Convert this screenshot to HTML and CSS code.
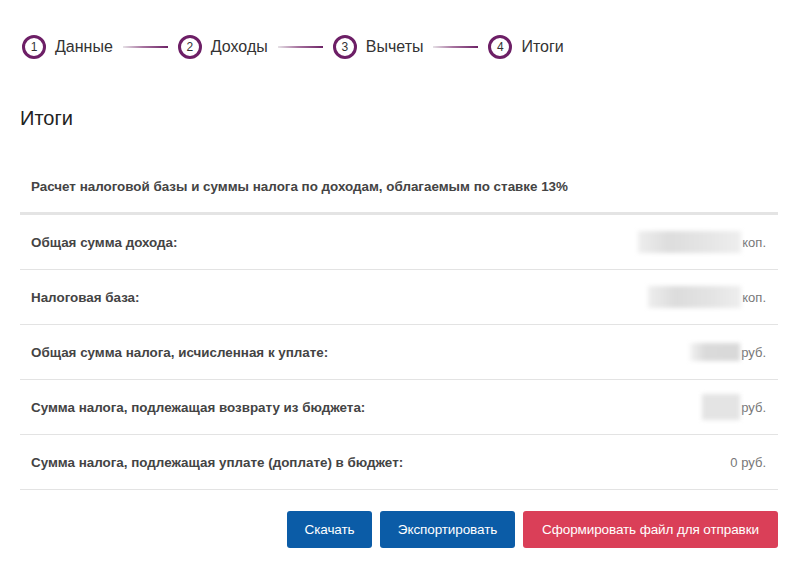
FILE: index.html
```html
<!DOCTYPE html>
<html lang="ru">
<head>
<meta charset="utf-8">
<link rel="stylesheet" href="styles.css">
</head>
<body>
<div class="page">
  <div class="stepper">
    <div class="step"><span class="num">1</span><span class="label">Данные</span></div>
    <span class="line"></span>
    <div class="step"><span class="num">2</span><span class="label">Доходы</span></div>
    <span class="line"></span>
    <div class="step"><span class="num">3</span><span class="label">Вычеты</span></div>
    <span class="line"></span>
    <div class="step"><span class="num">4</span><span class="label">Итоги</span></div>
  </div>

  <h1 class="title">Итоги</h1>

  <div class="table">
    <div class="caption">Расчет налоговой базы и суммы налога по доходам, облагаемым по ставке 13%</div>
    <div class="row"><span class="name">Общая сумма дохода:</span><span class="val"><span class="blur w1"></span>коп.</span></div>
    <div class="row"><span class="name">Налоговая база:</span><span class="val"><span class="blur w2"></span>коп.</span></div>
    <div class="row"><span class="name">Общая сумма налога, исчисленная к уплате:</span><span class="val"><span class="blur w3"></span>руб.</span></div>
    <div class="row"><span class="name">Сумма налога, подлежащая возврату из бюджета:</span><span class="val"><span class="blur w4"></span>руб.</span></div>
    <div class="row"><span class="name">Сумма налога, подлежащая уплате (доплате) в бюджет:</span><span class="val">0 руб.</span></div>
  </div>

  <div class="actions">
    <button class="btn blue b1">Скачать</button>
    <button class="btn blue b2">Экспортировать</button>
    <button class="btn red b3">Сформировать файл для отправки</button>
  </div>
</div>
</body>
</html>
```

FILE: styles.css
```css
* { box-sizing: border-box; }
html, body { margin: 0; padding: 0; background: #fff; }
body { font-family: "Liberation Sans", Arial, sans-serif; color: #333; }
.page { width: 800px; padding: 35px 22px 0 20px; }

.stepper { display: flex; align-items: center; height: 24px; padding-left: 2px; }
.step { display: flex; align-items: center; }
.num {
  width: 24px; height: 24px; border-radius: 50%;
  border: 3px solid #6d1f66;
  display: flex; align-items: center; justify-content: center;
  font-size: 12px; color: #333; line-height: 1;
}
.label { font-size: 16px; color: #333; margin-left: 9px; }
.line {
  width: 45px; height: 2px; margin: 0 10px 0 10px;
  background: linear-gradient(to right, #e6e1e6 0%, #a7739f 45%, #6d2366 100%);
}

.title { font-size: 20px; font-weight: normal; line-height: 24px; margin: 47px 0 0 0; color: #222; }

.table { margin-top: 30px; }
.caption {
  height: 55px; padding: 0 11px; font-size: 13.4px; font-weight: bold; color: #444;
  display: flex; align-items: center;
  border-bottom: 3px solid #e4e4e4;
}
.row {
  height: 55px; display: flex; align-items: center; justify-content: space-between;
  padding: 0 12px 0 11px; border-bottom: 1px solid #e3e3e3;
  font-size: 13.4px;
}
.name { font-weight: bold; color: #444; }
.val { color: #777; display: flex; align-items: center; font-size: 13px; }
.blur { display: inline-block; height: 22px; background: #e2e2e2; filter: blur(2px); margin-right: 1px; }
.w1 { width: 103px; background: linear-gradient(to right, #eee, #ddd 30%, #e6e6e6 70%, #eee); }
.w2 { width: 93px; background: linear-gradient(to right, #eee, #dcdcdc 30%, #e4e4e4 70%, #eee); }
.w3 { width: 50px; height: 18px; background: linear-gradient(to right, #f2f2f2, #dadada 30%, #d9d9d9); }
.w4 { width: 38px; height: 26px; background: #e4e4e4; }

.actions { display: flex; justify-content: flex-end; gap: 8px; margin-top: 21px; }
.btn {
  height: 37px; border: 0; border-radius: 3px; color: #fff;
  font-family: "Liberation Sans", Arial, sans-serif; font-size: 13.5px; letter-spacing: -0.1px;
  padding: 0; cursor: pointer;
}
.blue { background: #0b5ca7; }
.red { background: #da3f58; }
.b1 { width: 85px; }
.b2 { width: 135px; }
.b3 { width: 255px; }
```
